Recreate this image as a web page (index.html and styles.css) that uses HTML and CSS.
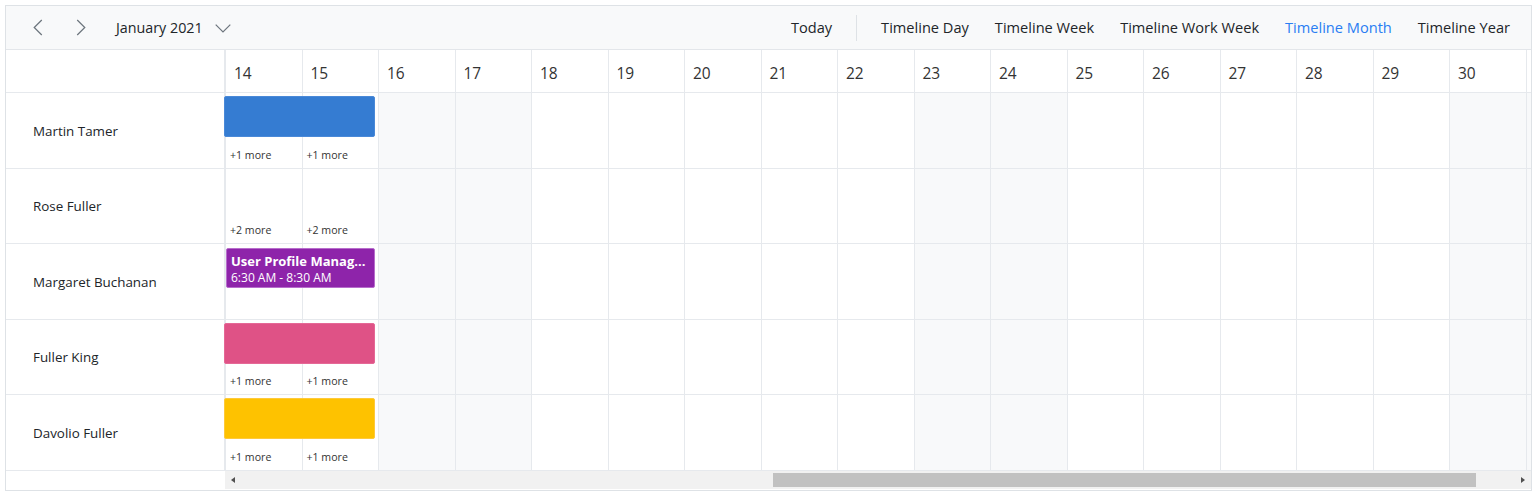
FILE: index.html
```html
<!DOCTYPE html>
<html lang="en">
<head>
<meta charset="utf-8">
<title>Timeline Month Scheduler</title>
<link rel="stylesheet" href="styles.css">
</head>
<body>
<div class="scheduler">
  <div class="toolbar">
    <div class="tb-left">
      <span class="nav-btn"><svg class="nav-ico" viewBox="0 0 10 18" width="10" height="17"><polyline points="9,1 1,9 9,17" fill="none" stroke="#6c757d" stroke-width="1.3"/></svg></span>
      <span class="nav-btn next"><svg class="nav-ico" viewBox="0 0 10 18" width="10" height="17"><polyline points="1,1 9,9 1,17" fill="none" stroke="#6c757d" stroke-width="1.3"/></svg></span>
      <span class="date-range">January 2021<svg class="dd-ico" viewBox="0 0 16 9" width="16" height="9"><polyline points="0.7,0.7 8,8 15.3,0.7" fill="none" stroke="#6c757d" stroke-width="1.2"/></svg></span>
    </div>
    <div class="tb-right">
      <span class="tb-item">Today</span>
      <span class="tb-sep"></span>
      <span class="tb-item">Timeline Day</span>
      <span class="tb-item">Timeline Week</span>
      <span class="tb-item">Timeline Work Week</span>
      <span class="tb-item active">Timeline Month</span>
      <span class="tb-item">Timeline Year</span>
    </div>
  </div>

  <div class="main">
    <div class="res-pane">
      <div class="res-head"></div>
      <div class="res-row">Martin Tamer</div>
      <div class="res-row">Rose Fuller</div>
      <div class="res-row">Margaret Buchanan</div>
      <div class="res-row">Fuller King</div>
      <div class="res-row">Davolio Fuller</div>
      <div class="res-foot"></div>
    </div>

    <div class="content-pane">
      <div class="date-head">
        <div class="dh-cell">14</div>
        <div class="dh-cell">15</div>
        <div class="dh-cell">16</div>
        <div class="dh-cell">17</div>
        <div class="dh-cell">18</div>
        <div class="dh-cell">19</div>
        <div class="dh-cell">20</div>
        <div class="dh-cell">21</div>
        <div class="dh-cell">22</div>
        <div class="dh-cell">23</div>
        <div class="dh-cell">24</div>
        <div class="dh-cell">25</div>
        <div class="dh-cell">26</div>
        <div class="dh-cell">27</div>
        <div class="dh-cell">28</div>
        <div class="dh-cell">29</div>
        <div class="dh-cell">30</div>
        <div class="dh-cell"></div>
      </div>

      <div class="work-row">
        <div class="cell"><span class="more">+1 more</span></div>
        <div class="cell"><span class="more">+1 more</span></div>
        <div class="cell we"></div><div class="cell we"></div>
        <div class="cell"></div><div class="cell"></div><div class="cell"></div><div class="cell"></div><div class="cell"></div>
        <div class="cell we"></div><div class="cell we"></div>
        <div class="cell"></div><div class="cell"></div><div class="cell"></div><div class="cell"></div><div class="cell"></div>
        <div class="cell we"></div><div class="cell we"></div>
        <div class="event ev-blue"></div>
      </div>

      <div class="work-row">
        <div class="cell"><span class="more">+2 more</span></div>
        <div class="cell"><span class="more">+2 more</span></div>
        <div class="cell we"></div><div class="cell we"></div>
        <div class="cell"></div><div class="cell"></div><div class="cell"></div><div class="cell"></div><div class="cell"></div>
        <div class="cell we"></div><div class="cell we"></div>
        <div class="cell"></div><div class="cell"></div><div class="cell"></div><div class="cell"></div><div class="cell"></div>
        <div class="cell we"></div><div class="cell we"></div>
      </div>

      <div class="work-row">
        <div class="cell"></div>
        <div class="cell"></div>
        <div class="cell we"></div><div class="cell we"></div>
        <div class="cell"></div><div class="cell"></div><div class="cell"></div><div class="cell"></div><div class="cell"></div>
        <div class="cell we"></div><div class="cell we"></div>
        <div class="cell"></div><div class="cell"></div><div class="cell"></div><div class="cell"></div><div class="cell"></div>
        <div class="cell we"></div><div class="cell we"></div>
        <div class="event ev-purple">
          <div class="ev-title">User Profile Manag...</div>
          <div class="ev-time">6:30 AM - 8:30 AM</div>
        </div>
      </div>

      <div class="work-row">
        <div class="cell"><span class="more">+1 more</span></div>
        <div class="cell"><span class="more">+1 more</span></div>
        <div class="cell we"></div><div class="cell we"></div>
        <div class="cell"></div><div class="cell"></div><div class="cell"></div><div class="cell"></div><div class="cell"></div>
        <div class="cell we"></div><div class="cell we"></div>
        <div class="cell"></div><div class="cell"></div><div class="cell"></div><div class="cell"></div><div class="cell"></div>
        <div class="cell we"></div><div class="cell we"></div>
        <div class="event ev-pink"></div>
      </div>

      <div class="work-row">
        <div class="cell"><span class="more">+1 more</span></div>
        <div class="cell"><span class="more">+1 more</span></div>
        <div class="cell we"></div><div class="cell we"></div>
        <div class="cell"></div><div class="cell"></div><div class="cell"></div><div class="cell"></div><div class="cell"></div>
        <div class="cell we"></div><div class="cell we"></div>
        <div class="cell"></div><div class="cell"></div><div class="cell"></div><div class="cell"></div><div class="cell"></div>
        <div class="cell we"></div><div class="cell we"></div>
        <div class="event ev-yellow"></div>
      </div>

      <div class="hscroll">
        <span class="sb-arrow left"></span>
        <div class="sb-track"><div class="sb-thumb"></div></div>
        <span class="sb-arrow right"></span>
      </div>
    </div>
  </div>
</div>
</body>
</html>
```

FILE: styles.css
```css
* { box-sizing: border-box; }

body {
  margin: 0;
  background: #ffffff;
  font-family: "Open Sans", "Noto Sans", sans-serif;
  color: #212529;
}

.scheduler {
  margin: 5px 0 0 5px;
  width: 1527px;
  height: 486px;
  border: 1px solid #dee2e6;
  display: flex;
  flex-direction: column;
  overflow: hidden;
}

/* Toolbar */
.toolbar {
  height: 44px;
  flex: none;
  background: #f8f9fa;
  border-bottom: 1px solid #e3e6ea;
  display: flex;
  align-items: center;
  justify-content: space-between;
  padding: 0 8px 0 14px;
  font-size: 14.6px;
  color: #212529;
}

.tb-left {
  display: flex;
  align-items: center;
  height: 100%;
}

.nav-btn {
  width: 36px;
  height: 32px;
  display: flex;
  align-items: center;
  justify-content: center;
}

.nav-btn.next { margin-left: 7px; }

.date-range {
  margin-left: 17px;
  display: flex;
  align-items: center;
  padding-bottom: 1px;
  font-size: 14.3px;
}

.dd-ico {
  margin-left: 12px;
  margin-top: 2px;
}

.tb-right {
  display: flex;
  align-items: center;
  height: 100%;
}

.tb-item {
  padding: 0 13px 1px;
  white-space: nowrap;
}

.tb-item.active { color: #2a7ef3; }

.tb-sep {
  width: 1px;
  height: 26px;
  background: #dee2e6;
  margin: 0 11px;
}

/* Main grid */
.main {
  flex: 1;
  display: flex;
  min-height: 0;
}

.res-pane {
  width: 218px;
  flex: none;
  display: flex;
  flex-direction: column;
}

.res-head {
  height: 43px;
  flex: none;
  border-bottom: 1px solid #e6e9ed;
}

.res-row {
  height: 75.5px;
  flex: none;
  border-bottom: 1px solid #e6e9ed;
  display: flex;
  align-items: center;
  padding: 1px 0 0 27px;
  font-size: 13.4px;
  color: #212529;
}

.res-foot { flex: 1; }

.content-pane {
  flex: 1;
  min-width: 0;
  overflow: hidden;
  display: flex;
  flex-direction: column;
}

.date-head,
.work-row {
  display: grid;
  grid-template-columns: 78.5px repeat(17, 76.5px);
  flex: none;
}

.date-head {
  height: 43px;
  border-bottom: 1px solid #e6e9ed;
}

.dh-cell {
  border-right: 1px solid #e6e9ed;
  font-size: 15.5px;
  padding: 3px 0 0 8px;
  display: flex;
  align-items: center;
  color: #333333;
}

.dh-cell:first-child,
.work-row .cell:first-child {
  border-left: 2px solid #e6e9ed;
  padding-left: 8px;
}

.work-row {
  height: 75.5px;
  border-bottom: 1px solid #e6e9ed;
  position: relative;
}

.cell {
  border-right: 1px solid #e6e9ed;
  display: flex;
  align-items: flex-end;
  padding: 0 0 5px 4px;
}

.work-row .cell:first-child { padding-left: 4px; }

.cell.we { background: #f8f9fa; }

.more {
  font-size: 10.6px;
  line-height: 15px;
  color: #333333;
  white-space: nowrap;
}

/* Appointments */
.event {
  position: absolute;
  top: 3px;
  height: 41px;
  left: 0;
  width: 151px;
  border-radius: 2px;
  border: 1px solid transparent;
}

.ev-blue { background: #357cd2; border-color: #4a89d8; }
.ev-pink { background: #df5286; border-color: #e56896; }
.ev-yellow { background: #fec200; border-color: #fec93a; }

.ev-purple {
  left: 2px;
  width: 149px;
  top: 3.5px;
  height: 40px;
  background: #8e24aa;
  border-color: #b76dcc;
  color: #ffffff;
  padding: 3px 4px 0 4px;
}

.ev-title {
  font-size: 13px;
  font-weight: 700;
  line-height: 18px;
  white-space: nowrap;
}

.ev-time {
  font-size: 12px;
  line-height: 16px;
  white-space: nowrap;
}

/* Scrollbar */
.hscroll {
  flex: none;
  height: 18px;
  background: #f1f1f1;
  display: flex;
  align-items: center;
  margin-left: 1px;
}

.sb-arrow {
  width: 16px;
  height: 100%;
  display: flex;
  align-items: center;
  justify-content: center;
  flex: none;
}

.sb-arrow::before {
  content: "";
  width: 0;
  height: 0;
  border-top: 3.5px solid transparent;
  border-bottom: 3.5px solid transparent;
}

.sb-arrow.left::before { border-right: 4px solid #505050; }
.sb-arrow.right::before { border-left: 4px solid #505050; }

.sb-track {
  flex: 1;
  height: 100%;
  display: flex;
  align-items: center;
  padding-left: 532px;
  padding-right: 39px;
}

.sb-thumb {
  flex: 1;
  height: 14px;
  background: #c1c1c1;
}
```
